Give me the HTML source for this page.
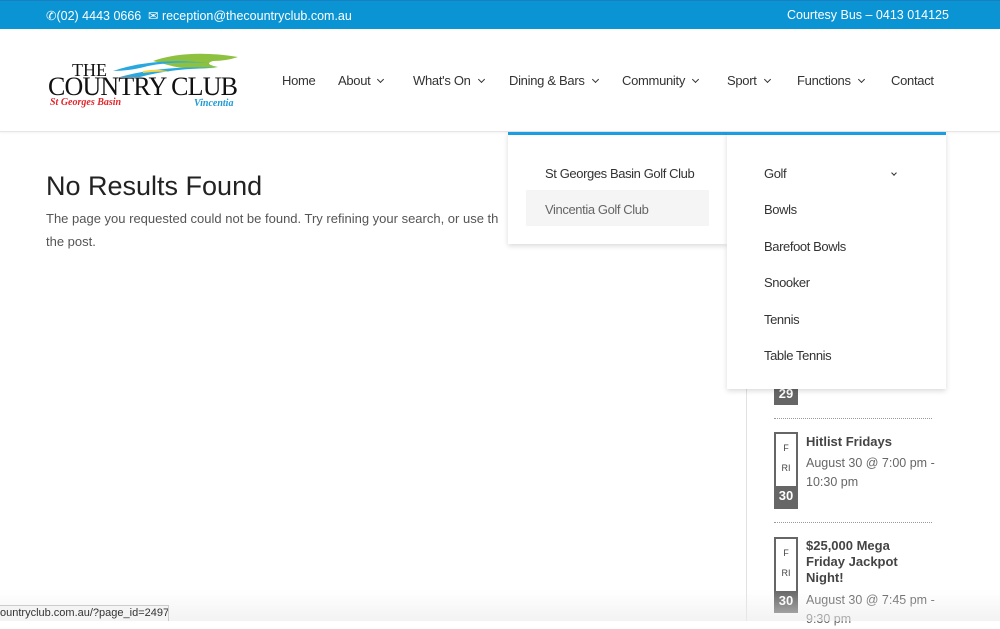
<!DOCTYPE html><html><head><style>
*{margin:0;padding:0;box-sizing:border-box}
body{width:1000px;height:621px;overflow:hidden;background:#fff;font-family:"Liberation Sans",sans-serif;color:#333;position:relative}
.top{position:absolute;left:0;top:0;width:1000px;height:29px;background:#0b94d3;color:#fff;font-size:12.5px;border-top:1px solid #1a7fc0}
.top span{position:absolute;top:7px}
.hdr{position:absolute;left:0;top:29px;width:1000px;height:103px;border-bottom:1px solid #e6e6e6;box-shadow:0 1px 2px rgba(0,0,0,.05)}
.nav{position:absolute;top:44px;font-size:13px;color:#333;letter-spacing:-.3px}
.ch{display:inline-block;width:5px;height:5px;border-right:1.3px solid #333;border-bottom:1.3px solid #333;transform:rotate(45deg);margin-left:8px;position:relative;top:-3px}
.a{position:absolute}
h1{position:absolute;left:46px;top:171px;font-size:27px;font-weight:normal;color:#222}
.p{position:absolute;left:46px;font-size:13px;color:#555}
.dd{position:absolute;background:#fff;box-shadow:0 2px 5px rgba(0,0,0,.15);border-top:3px solid #1a9ee0}
.dd div{position:absolute;font-size:13px;color:#333;letter-spacing:-.4px}
.ev{position:absolute;left:774px;width:24px;background:#666;border:2px solid #666}
.ev .w{background:#fff;font-size:9px;text-align:center;color:#444;line-height:20px;padding-top:4px}
.ev .n{color:#fff;font-weight:bold;font-size:13px;text-align:center;line-height:20px}
.t{position:absolute;left:806px;font-size:13px;font-weight:bold;color:#444;line-height:16px}
.d{position:absolute;left:806px;font-size:12.5px;color:#666;line-height:19px}
.hr{position:absolute;left:774px;width:158px;border-top:1px dotted #999}
</style></head><body>
<div class="top"><span style="left:46px">✆(02) 4443 0666</span><span style="left:148px">✉ reception@thecountryclub.com.au</span><span style="left:787px">Courtesy Bus – 0413 014125</span></div>
<div class="hdr">
<svg class="a" style="left:48px;top:22px" width="195" height="58" viewBox="0 0 195 58">
<path d="M105 10 Q140 -2 190 6 Q178 10 165 10 Q155 13 170 16 Q140 20 120 14 Z" fill="#8dc13f"/>
<path d="M65 20 Q105 6 160 12 Q125 10 100 15 Q82 20 65 20Z" fill="#29a8e0"/>
<path d="M72 26 Q115 14 170 17 Q125 17 92 26Z" fill="#29a8e0"/>
<path d="M95 20 Q110 17 122 21 Q108 20 95 22Z" fill="#f4d742"/>
<text x="24" y="25" font-family="Liberation Serif" font-size="18" fill="#111">THE</text>
<text x="0" y="44" font-family="Liberation Serif" font-size="26" fill="#111" textLength="190">COUNTRY CLUB</text>
<text x="2" y="54" font-family="Liberation Serif" font-style="italic" font-weight="bold" font-size="10" fill="#e2262b">St Georges Basin</text>
<text x="146" y="55" font-family="Liberation Serif" font-style="italic" font-weight="bold" font-size="10" fill="#1d9ad6">Vincentia</text>
</svg>
<div class="nav" style="left:282px">Home</div>
<div class="nav" style="left:338px">About<i class="ch"></i></div>
<div class="nav" style="left:413px">What's On<i class="ch"></i></div>
<div class="nav" style="left:509px">Dining &amp; Bars<i class="ch"></i></div>
<div class="nav" style="left:622px">Community<i class="ch"></i></div>
<div class="nav" style="left:727px">Sport<i class="ch"></i></div>
<div class="nav" style="left:797px">Functions<i class="ch"></i></div>
<div class="nav" style="left:891px">Contact</div>
</div>
<h1>No Results Found</h1>
<div class="p" style="top:211px">The page you requested could not be found. Try refining your search, or use th</div>
<div class="p" style="top:234px">the post.</div>
<div class="a" style="left:746px;top:380px;width:1px;height:241px;background:#e2e2e2"></div>
<div class="ev" style="top:370px;height:35px"><div class="n" style="line-height:16px;margin-top:14px">29</div></div>
<div class="hr" style="top:418px"></div>
<div class="ev" style="top:432px;height:77px"><div class="w" style="height:52px">F<br>RI</div><div class="n">30</div></div>
<div class="t" style="top:434px">Hitlist Fridays</div>
<div class="d" style="top:454px">August 30 @ 7:00 pm -<br>10:30 pm</div>
<div class="hr" style="top:522px"></div>
<div class="ev" style="top:537px;height:76px"><div class="w" style="height:52px">F<br>RI</div><div class="n">30</div></div>
<div class="t" style="top:538px">$25,000 Mega<br>Friday Jackpot<br>Night!</div>
<div class="d" style="top:591px">August 30 @ 7:45 pm -<br>9:30 pm</div>
<div class="dd" style="left:508px;top:132px;width:219px;height:112px">
<div style="left:37px;top:31px">St Georges Basin Golf Club</div>
<div style="left:18px;top:55px;width:183px;height:36px;background:#f5f5f5"></div>
<div style="left:37px;top:67px;color:#666">Vincentia Golf Club</div>
</div>
<div class="dd" style="left:727px;top:132px;width:219px;height:257px">
<div style="left:37px;top:31px">Golf</div><i class="ch" style="position:absolute;left:165px;top:36px;margin:0;width:4px;height:4px;border-width:1px"></i>
<div style="left:37px;top:67px">Bowls</div>
<div style="left:37px;top:104px">Barefoot Bowls</div>
<div style="left:37px;top:140px">Snooker</div>
<div style="left:37px;top:177px">Tennis</div>
<div style="left:37px;top:213px">Table Tennis</div>
</div>
<div class="a" style="left:0;top:590px;width:1000px;height:31px;background:linear-gradient(rgba(255,255,255,0),rgba(235,235,235,.6))"></div>
<div class="a" style="left:0;top:605px;width:169px;height:16px;background:#f4f4f4;border:1px solid #ccc;border-left:0;border-bottom:0;font-size:11px;color:#333;padding:1px 0 0 0;white-space:nowrap;overflow:hidden">ountryclub.com.au/?page_id=24977</div>
</body></html>
